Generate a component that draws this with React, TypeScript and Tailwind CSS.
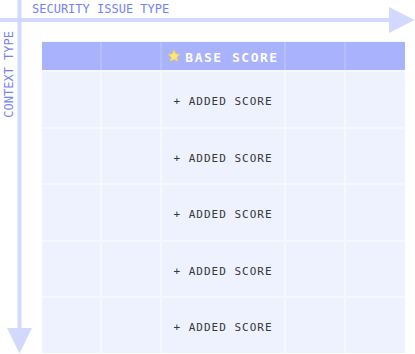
import React from "react";

const mono = "font-['DejaVu_Sans_Mono','Liberation_Mono',monospace]";

function Star() {
  return (
    <svg width="14" height="14" viewBox="0 0 24 24" className="shrink-0">
      <path
        d="M12 2.2l3 6.2 6.8.9-5 4.7 1.3 6.8L12 17.4l-6.1 3.4 1.3-6.8-5-4.7 6.8-.9z"
        fill="#fbe77c"
        stroke="#f2d05a"
        strokeWidth="1.6"
        strokeLinejoin="round"
      />
    </svg>
  );
}

export default function App() {
  const rows = [0, 1, 2, 3, 4];
  const cols = "grid grid-cols-[58px_58px_122px_58px_1fr] gap-x-[2px]";
  return (
    <div className={`relative w-[415px] h-[354px] overflow-hidden bg-white ${mono}`}>
      <svg className="absolute inset-0" width="415" height="354" viewBox="0 0 415 354">
        <rect x="0" y="18" width="392" height="4" fill="#d3d8fe" />
        <polygon points="389,7 414.5,20 389,33" fill="#d3d8fe" />
        <rect x="17.5" y="0" width="4" height="330" fill="#d3d8fe" />
        <polygon points="7,328 19.5,353.5 32,328" fill="#d3d8fe" />
      </svg>
      <div className="relative flex flex-col">
        <div className="h-[17px] pl-[32px] pt-[1px] text-[12px] leading-[16px] text-[#7482f4]">
          SECURITY ISSUE TYPE
        </div>
        <div className="flex">
          <div className="w-[42px] pt-[14px] pl-[1px]">
            <div className="[writing-mode:vertical-rl] rotate-180 text-[12px] leading-[16px] text-[#7482f4]">
              CONTEXT TYPE
            </div>
          </div>
          <div className="flex-1 pt-[24px] pr-[10px]">
            <div className="flex flex-col gap-y-[2px] bg-[#f7f8ff] pt-[1px]">
              <div className={`${cols} bg-[#b6befe]`}>
                <div className="h-[28px] bg-[#a8b2fd]" />
                <div className="h-[28px] bg-[#a8b2fd]" />
                <div className="h-[28px] bg-[#a8b2fd] flex items-center justify-center gap-[4px]">
                  <Star />
                  <span className="text-[13px] font-bold tracking-[1.5px] text-white leading-none pt-[2px] whitespace-pre">
                    BASE SCORE
                  </span>
                </div>
                <div className="h-[28px] bg-[#a8b2fd]" />
                <div className="h-[28px] bg-[#a8b2fd]" />
              </div>
              <div className={`${cols} gap-y-[2px]`}>
                {rows.map((r) => (
                  <React.Fragment key={r}>
                    <div className="h-[54.5px] bg-[#eef1fe]" />
                    <div className="h-[54.5px] bg-[#eef1fe]" />
                    <div className="h-[54.5px] bg-[#eef1fe] flex items-center justify-center">
                      <span className="text-[11px] leading-[14px] pt-[6px] tracking-[1px] text-[#383838] whitespace-pre">
                        + ADDED SCORE
                      </span>
                    </div>
                    <div className="h-[54.5px] bg-[#eef1fe]" />
                    <div className="h-[54.5px] bg-[#eef1fe]" />
                  </React.Fragment>
                ))}
              </div>
            </div>
          </div>
        </div>
      </div>
    </div>
  );
}
